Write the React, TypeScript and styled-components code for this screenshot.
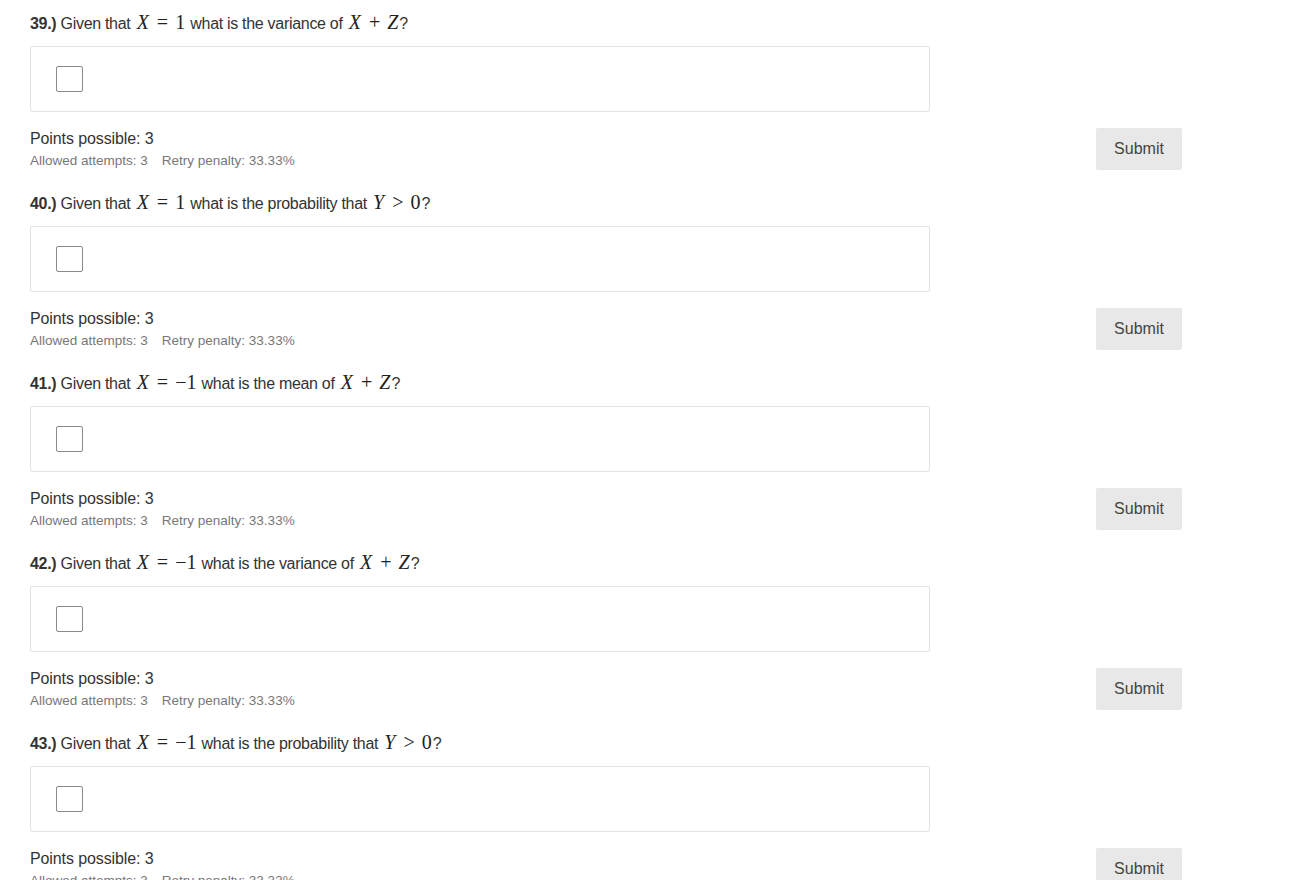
import React from "react";
import styled, { createGlobalStyle } from "styled-components";

const GlobalStyle = createGlobalStyle`
  body {
    margin: 0;
    background: #fff;
    font-family: "Liberation Sans", Arial, sans-serif;
    color: #333;
  }
`;

const Page = styled.div`
  padding: 12px 0 0 30px;
  display: flex;
  flex-direction: column;
  gap: 22px;
`;

const Block = styled.section`
  width: 1152px;
  display: flex;
  flex-direction: column;
`;

const Question = styled.div`
  height: 22px;
  font-size: 16px;
  letter-spacing: -0.3px;
  line-height: 24px;
  color: #333;
  white-space: nowrap;
`;

const Num = styled.b`
  font-weight: 700;
`;

const MathWrap = styled.span`
  font-family: "Liberation Serif", "Times New Roman", serif;
  font-size: 20px;
  letter-spacing: 0;
  line-height: 0;
  color: #222;
  padding: 0 1px 0 2px;
`;

const Var = styled.i`
  font-style: italic;
`;

const Op = styled.span`
  padding: 0 7px 0 8px;
`;

const AnswerBox = styled.div`
  margin-top: 12px;
  width: 900px;
  height: 66px;
  box-sizing: border-box;
  border: 1px solid #e2e2e2;
  border-radius: 2px;
  padding: 19px 0 0 25px;
`;

const Check = styled.div`
  width: 27px;
  height: 26px;
  box-sizing: border-box;
  border: 1px solid #8a8a8a;
  border-radius: 2px;
  background: #fff;
`;

const Footer = styled.div`
  margin-top: 16px;
  display: flex;
  justify-content: space-between;
  align-items: flex-start;
`;

const Info = styled.div`
  display: flex;
  flex-direction: column;
  gap: 4px;
`;

const Points = styled.div`
  font-size: 16px;
  letter-spacing: -0.1px;
  line-height: 21px;
  color: #333;
`;

const Meta = styled.div`
  font-size: 13.5px;
  line-height: 16px;
  color: #777;
  display: flex;
  gap: 14px;
`;

const SubmitButton = styled.button`
  width: 86px;
  height: 42px;
  border: none;
  border-radius: 2px;
  background: #e8e8e8;
  color: #444;
  font-family: "Liberation Sans", Arial, sans-serif;
  font-size: 16px;
  cursor: pointer;
`;

type Part = { t: "v" | "o" | "n"; s: string };

function MathExpr({ parts }: { parts: Part[] }) {
  return (
    <MathWrap>
      {parts.map((p, i) =>
        p.t === "v" ? (
          <Var key={i}>{p.s}</Var>
        ) : p.t === "o" ? (
          <Op key={i}>{p.s}</Op>
        ) : (
          <span key={i}>{p.s}</span>
        )
      )}
    </MathWrap>
  );
}

const xEq = (v: string): Part[] => [
  { t: "v", s: "X" },
  { t: "o", s: "=" },
  { t: "n", s: v },
];
const xPlusZ: Part[] = [
  { t: "v", s: "X" },
  { t: "o", s: "+" },
  { t: "v", s: "Z" },
];
const yGt0: Part[] = [
  { t: "v", s: "Y" },
  { t: "o", s: ">" },
  { t: "n", s: "0" },
];

const questions = [
  { n: 39, x: "1", mid: "what is the variance of", tail: xPlusZ },
  { n: 40, x: "1", mid: "what is the probability that", tail: yGt0 },
  { n: 41, x: "\u22121", mid: "what is the mean of", tail: xPlusZ },
  { n: 42, x: "\u22121", mid: "what is the variance of", tail: xPlusZ },
  { n: 43, x: "\u22121", mid: "what is the probability that", tail: yGt0 },
];

export default function App() {
  return (
    <>
      <GlobalStyle />
      <Page>
        {questions.map((q) => (
          <Block key={q.n}>
            <Question>
              <Num>{q.n}.)</Num> Given that <MathExpr parts={xEq(q.x)} /> {q.mid}{" "}
              <MathExpr parts={q.tail} />?
            </Question>
            <AnswerBox>
              <Check />
            </AnswerBox>
            <Footer>
              <Info>
                <Points>Points possible: 3</Points>
                <Meta>
                  <span>Allowed attempts: 3</span>
                  <span>Retry penalty: 33.33%</span>
                </Meta>
              </Info>
              <SubmitButton type="button">Submit</SubmitButton>
            </Footer>
          </Block>
        ))}
      </Page>
    </>
  );
}
